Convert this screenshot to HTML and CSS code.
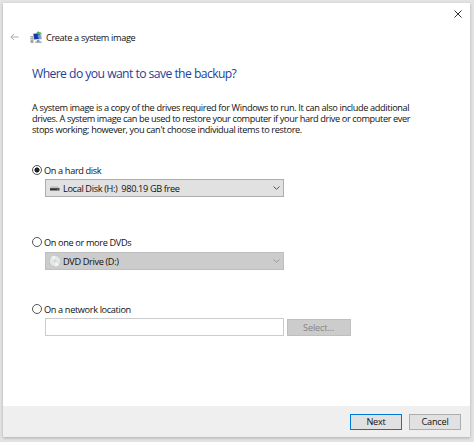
FILE: index.html
```html
<!DOCTYPE html>
<html lang="en">
<head>
<meta charset="utf-8">
<title>Create a system image</title>
<link rel="stylesheet" href="styles.css">
</head>
<body>
<main class="dialog">
  <div class="titlebar">
    <svg class="close" viewBox="0 0 8 8"><path d="M.5 .5l7 7M7.500 .5l-7 7"/></svg>
  </div>
  <header class="header">
    <svg class="back" viewBox="0 0 10 8"><path d="M9.500 4H1M4.500 .6L1 4l3.500 3.400"/></svg>
    <svg class="app-icon" viewBox="0 0 13 13">
      <path fill="#a3a89b" d="M.5 5h3v7h-3z"/><path fill="#e4e6dc" d="M1.200 6h1.400v1H1.200zM1.200 8h1.400v1H1.200z"/>
      <path fill="#b8c4d4" d="M2.800 2.200l8.400-.6.8 6.700-8.200.7z"/><path fill="#1c35ac" d="M3.600 3l5.800-.5.700 5.200-5.900.5z"/>
      <path fill="#6b9de5" d="M7.500 4.500l3-.8.500 4-2 .2z"/>
      <path fill="#8c98a0" d="M6.800 9h2.400l.5 1.600h2v1.200H5.300v-1.200h1.600z"/>
      <path fill="#48b552" d="M6 2.200L8.400 0l.3 1c1.800 0 2.800.8 3 2.600-.8-.9-1.800-1.200-2.900-.9v1.200z"/>
    </svg>
    <span class="caption">Create a system image</span>
  </header>
  <section class="content">
    <h1>Where do you want to save the backup?</h1>
    <div class="intro">
      <div>A system image is a copy of the drives required for Windows to run. It can also include additional</div>
      <div class="tight">drives. A system image can be used to restore your computer if your hard drive or computer ever</div>
      <div>stops working; however, you can't choose individual items to restore.</div>
    </div>
    <div class="option disk">
      <div class="choice"><i class="radio on"></i><span>On a hard disk</span></div>
      <div class="select">
        <svg class="drive" viewBox="0 0 12 12"><path fill="#b9bdbd" d="M2 4.500h7l1 1.800H1z"/><path fill="#303635" d="M1 6.200h9.500v2.300H1z"/><path fill="#4da66b" d="M8 7h1.500v.8H8z"/></svg>
        <span>Local Disk (H:)&nbsp; 980.19 GB free</span>
        <svg class="chevron" viewBox="0 0 7 4"><path d="M.5 .5l3 2.800 3-2.800"/></svg>
      </div>
    </div>
    <div class="option dvd">
      <div class="choice"><i class="radio"></i><span>On one or more DVDs</span></div>
      <div class="select disabled">
        <svg class="drive" viewBox="0 0 12 12"><circle cx="6" cy="6" r="5.600" fill="#e3e7e7" stroke="#b3b8b8" stroke-width=".5"/><path fill="#f0f4f3" d="M6 6L2 2a5.500 5.500 0 0 1 4-1.500zM6 6l4 4a5.500 5.500 0 0 1-4 1.500z"/><circle cx="6" cy="6" r="1.500" fill="#c8cece"/><circle cx="6" cy="6" r=".6" fill="#fff"/></svg>
        <span>DVD Drive (D:)</span>
        <svg class="chevron" viewBox="0 0 7 4"><path d="M.5 .5l3 2.800 3-2.800"/></svg>
      </div>
    </div>
    <div class="option network">
      <div class="choice"><i class="radio"></i><span>On a network location</span></div>
      <div class="row"><div class="field"></div><div class="browse">Select...</div></div>
    </div>
  </section>
  <footer class="footer">
    <div class="button primary">Next</div>
    <div class="button">Cancel</div>
  </footer>
</main>
</body>
</html>
```

FILE: styles.css
```css
* { box-sizing: border-box; }
body {
  margin: 0;
  height: 442px;
  padding: 3px 4px 5px 3px;
  overflow: hidden;
  background: #e4e4e4;
  color: #111;
  font: 9.2px/11px "Open Sans", "Noto Sans", sans-serif;
  letter-spacing: -0.36px;
  white-space: nowrap;
}
svg { display: block; flex: none; fill: none; }
.dialog {
  display: flex;
  flex-direction: column;
  height: 434px;
  background: #fff;
  box-shadow: 0 1px 3px #aaa;
}
.titlebar { display: flex; justify-content: flex-end; height: 24px; padding: 7px 8px 0 0; }
.close { width: 8px; height: 8px; stroke: #333; stroke-width: 1; }
.header { display: flex; align-items: center; height: 20px; padding-left: 7px; }
.back { width: 9px; height: 8px; stroke: #aaa; stroke-width: 1.1; }
.app-icon { width: 13px; height: 13px; margin: 0 3px 0 11px; }
.content { flex: 1; padding: 17px 0 0 29px; }
h1 {
  margin: 0;
  height: 20px;
  color: #1f419b;
  font-size: 12.2px;
  line-height: 20px;
  font-weight: 400;
  letter-spacing: -0.62px;
  word-spacing: 0.2px;
}
.intro { margin-top: 18px; line-height: 11.2px; height: 34px; }
.tight { letter-spacing: -0.39px; }
.option { height: 72px; }
.disk { margin-top: 27px; }
.network { margin-top: -5px; }
.choice { display: flex; align-items: center; height: 14px; }
.radio { width: 10px; height: 10px; margin-right: 2px; border: 1px solid #555; border-radius: 50%; background: #fff; }
.on { background: radial-gradient(circle, #222 0 2.200px, #fff 2.900px); }
.select {
  display: flex;
  align-items: center;
  width: 238.5px;
  height: 18px;
  margin: 2px 0 0 13px;
  padding: 0 3px;
  border: 1px solid #adadad;
  background: #e1e1e1;
}
.dvd .select { margin-top: 3px; }
.disabled { background: #ccc; border-color: #bfbfbf; }
.drive { width: 12px; height: 12px; margin-right: 2px; }
.chevron { width: 7px; height: 4px; margin-left: auto; stroke: #555; }
.disabled .chevron { stroke: #999; }
.row { display: flex; align-items: flex-end; gap: 3px; margin: 2px 0 0 13px; }
.field { width: 238.5px; height: 18px; border: 1px solid #ccc; }
.browse { width: 64px; height: 17px; border: 1px solid #bfbfbf; background: #ccc; color: #858585; text-align: center; line-height: 15px; letter-spacing: -0.2px; }
.footer { display: flex; gap: 7px; justify-content: flex-end; height: 31px; padding: 8px 9px 0 0; background: #efefef; }
.button { width: 52px; height: 16px; border: 1px solid #adadad; background: #e1e1e1; text-align: center; line-height: 14px; letter-spacing: -0.25px; }
.primary { border-color: #0078d7; }
```
